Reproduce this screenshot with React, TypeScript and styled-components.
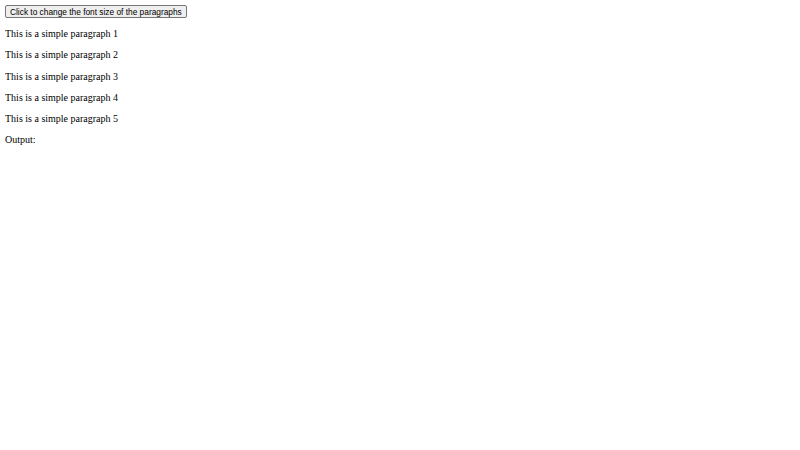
import React from "react";
import styled, { createGlobalStyle } from "styled-components";

const Global = createGlobalStyle`
  html, body { background: #fff; }
  body {
    margin: 5px;
    font-family: "Liberation Serif", "Times New Roman", serif;
    font-size: 10px;
    line-height: 11.25px;
    color: #000;
  }
`;

const Toolbar = styled.div`
  display: flex;
  height: 13px;
`;

const Button = styled.button`
  font-family: "Liberation Sans", Arial, sans-serif;
  font-size: 8.33px;
  line-height: 10px;
  height: 13px;
  padding: 0 4px;
  margin: 0;
  background: #efefef;
  color: #000;
  border: 1px solid #767676;
  border-radius: 2px;
  cursor: pointer;
`;

const Paragraph = styled.p`
  margin: 10px 0;
  font-size: 10px;
  line-height: 11.25px;
`;

export default function App() {
  const items = [1, 2, 3, 4, 5];
  return (
    <>
      <Global />
      <Toolbar>
        <Button>Click to change the font size of the paragraphs</Button>
      </Toolbar>
      {items.map((n) => (
        <Paragraph key={n}>This is a simple paragraph {n}</Paragraph>
      ))}
      <Paragraph>Output:</Paragraph>
    </>
  );
}
